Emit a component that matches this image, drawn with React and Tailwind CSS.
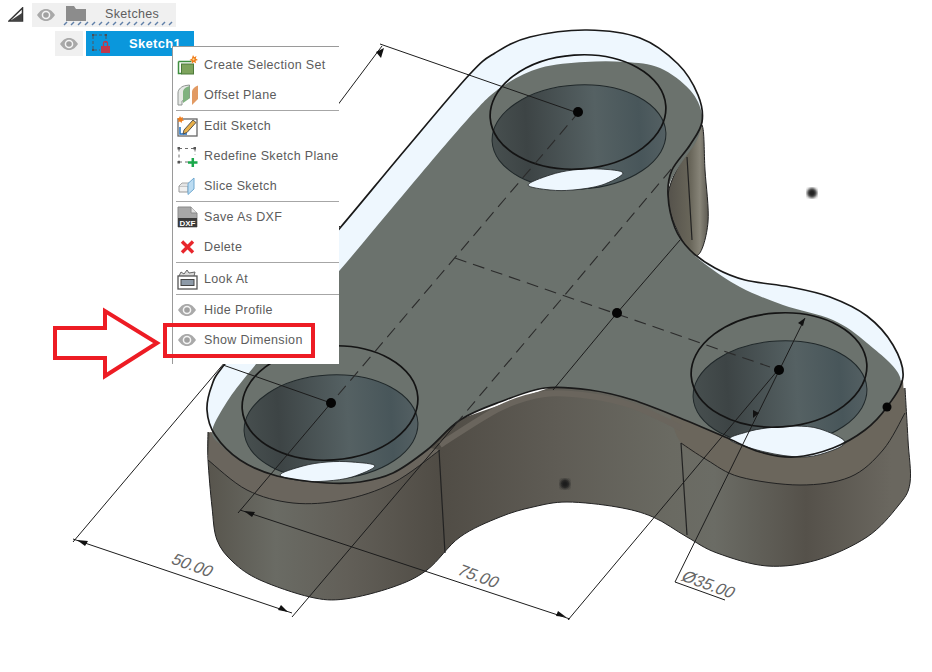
import React from "react";

// turn a list of points into a smooth svg path (catmull-rom)
function smooth(pts, closed = false) {
  const n = pts.length;
  const at = (i) => (closed ? pts[(i + n) % n] : pts[Math.max(0, Math.min(n - 1, i))]);
  let d = `M${pts[0][0]} ${pts[0][1]}`;
  const last = closed ? n : n - 1;
  for (let i = 0; i < last; i++) {
    const [p0, p1, p2, p3] = [at(i - 1), at(i), at(i + 1), at(i + 2)];
    const c1 = [p1[0] + (p2[0] - p0[0]) / 6, p1[1] + (p2[1] - p0[1]) / 6];
    const c2 = [p2[0] - (p3[0] - p1[0]) / 6, p2[1] - (p3[1] - p1[1]) / 6];
    d += `C${c1[0].toFixed(1)} ${c1[1].toFixed(1)} ${c2[0].toFixed(1)} ${c2[1].toFixed(1)} ${p2[0]} ${p2[1]}`;
  }
  return closed ? d + "Z" : d;
}

const outline = [
  [340, 228], [405, 150], [469, 75], [495, 53], [530, 37], [587, 30], [640, 38], [678, 64], [698, 95], [702, 122],
  [690, 145], [672, 170], [668, 195], [675, 228], [690, 250], [715, 268], [745, 280], [790, 287], [830, 297],
  [867, 316], [893, 345], [903, 377], [887, 407], [865, 430], [833, 448], [795, 457], [760, 452], [725, 437],
  [680, 418], [633, 400], [590, 390], [545, 388], [500, 402], [460, 420], [427, 450], [393, 473], [360, 482],
  [327, 483], [277, 476], [240, 460], [215, 435], [207, 410], [212, 385], [224, 365], [280, 297],
];

const face = [
  [340, 270], [403, 195], [467, 120], [500, 88], [540, 68], [585, 62], [625, 62], [660, 68], [690, 90], [702, 115],
  [697, 140], [680, 165], [668, 190], [672, 220], [685, 245], [705, 264], [740, 287], [783, 305], [833, 320],
  [867, 343], [900, 377], [887, 407], [865, 430], [833, 448], [795, 457], [760, 452], [725, 437], [680, 418],
  [633, 400], [590, 390], [545, 388], [500, 402], [460, 420], [427, 450], [393, 473], [360, 482], [327, 483],
  [277, 476], [240, 460], [222, 446], [212, 432], [225, 405], [247, 375], [290, 325],
];

const bodyEdge = [
  [208, 432], [208, 460], [212, 507], [217, 540], [233, 562], [260, 580], [310, 597], [345, 599], [393, 587], [427, 570],
  [460, 537], [500, 517], [533, 507], [567, 502], [617, 507], [653, 517], [687, 537], [717, 553], [767, 566],
  [817, 560], [867, 537], [898, 506], [910, 483], [908, 440], [905, 388],
];

const holes = [
  { cx: 578, cy: 112, wx: 579, wy: 137, id: "a", white: [[528, 185], [550, 175], [573, 170], [600, 169], [623, 173], [602, 185], [573, 190], [550, 190]] },
  { cx: 330, cy: 403, wx: 331, wy: 427, id: "b", white: [[280, 475], [303, 466], [327, 462], [352, 462], [375, 466], [352, 477], [327, 481], [303, 481]] },
  { cx: 779, cy: 370, wx: 780, wy: 393, id: "c", white: [[730, 440], [747, 432], [767, 428], [795, 426], [820, 429], [845, 442], [825, 453], [800, 457], [765, 452]] },
];

const leftBand = [[208, 460], [247, 490], [293, 503], [343, 500], [393, 483], [440, 450]];
const rightBand = [[681, 443], [707, 460], [740, 477], [800, 485], [850, 477], [883, 450], [905, 413]];

function Model() {
  return (
    <svg className="absolute inset-0" width="932" height="672" viewBox="0 0 932 672" fill="none">
      <defs>
        <linearGradient id="side" gradientUnits="userSpaceOnUse" x1="205" y1="0" x2="912" y2="0">
          <stop offset="0" stopColor="#57544c" />
          <stop offset="0.1" stopColor="#6a6b64" />
          <stop offset="0.2" stopColor="#625f58" />
          <stop offset="0.33" stopColor="#504c45" />
          <stop offset="0.5" stopColor="#5f5c55" />
          <stop offset="0.66" stopColor="#6a6a62" />
          <stop offset="0.72" stopColor="#6b6c65" />
          <stop offset="0.85" stopColor="#55514a" />
          <stop offset="0.97" stopColor="#6a675f" />
        </linearGradient>
        <linearGradient id="neck" gradientUnits="userSpaceOnUse" x1="668" y1="0" x2="708" y2="0">
          <stop offset="0" stopColor="#55524b" />
          <stop offset="0.55" stopColor="#686559" />
          <stop offset="0.8" stopColor="#878478" />
          <stop offset="1" stopColor="#5e5b53" />
        </linearGradient>
        {holes.map((h) => (
          <linearGradient key={h.id} id={`wall-${h.id}`} x1="0" y1="0" x2="1" y2="0">
            <stop offset="0" stopColor="#474f4f" />
            <stop offset="0.2" stopColor="#3d4445" />
            <stop offset="0.6" stopColor="#556163" />
            <stop offset="0.85" stopColor="#48565a" />
            <stop offset="1" stopColor="#546063" />
          </linearGradient>
        ))}
        <filter id="soft"><feGaussianBlur stdDeviation="1.6" /></filter>
      </defs>

      <path d={smooth(outline, true)} fill="#eef7fe" />
      <path d={smooth([[702, 125], [705, 170], [708, 222], [698, 255], [682, 240], [668, 195], [690, 145]], true)} fill="url(#neck)" stroke="#222" strokeWidth="1" />
      <path d={smooth(bodyEdge) + "L800 400L600 370L400 440L250 440Z"} fill="url(#side)" />
      <path d={smooth(bodyEdge)} stroke="#222" strokeWidth="1" />
      <path d={smooth(leftBand) + "L393 440L250 440L210 432Z"} fill="#6a655d" />
      <path d={smooth([[670, 415], ...rightBand]) + "L903 380L800 400Z"} fill="#6b665c" />
      <path d={smooth([[440, 445], [500, 408], [545, 394], [590, 396], [633, 406], [681, 428]])} stroke="#6a655d" strokeWidth="6" />
      <path d={smooth(face, true)} fill="#6b726d" />

      {holes.map((h) => (
        <g key={h.id}>
          <ellipse cx={h.wx} cy={h.wy} rx="87" ry="52" transform={`rotate(-3 ${h.wx} ${h.wy})`} fill={`url(#wall-${h.id})`} stroke="#20282a" strokeWidth="1" />
          <path d={smooth(h.white, true)} fill="#eef7fe" stroke="#1f2324" strokeWidth="0.8" />
          <ellipse cx={h.cx} cy={h.cy} rx="88" ry="57" transform={`rotate(-4 ${h.cx} ${h.cy})`} stroke="#141414" strokeWidth="1.7" />
        </g>
      ))}

      <path d={smooth(outline, true)} stroke="#1a1a1a" strokeWidth="1.7" />
      <path d={smooth(leftBand)} stroke="#222" strokeWidth="1" />
      <path d={smooth(rightBand)} stroke="#222" strokeWidth="1" />
      <path d="M439 450L445 553M681 443L687 535M687 157L692 240" stroke="#222" strokeWidth="1.2" />

      {/* dashed construction lines */}
      <g stroke="#2b2b2b" strokeWidth="1.1" strokeDasharray="12 7">
        <path d="M338 395L578 113" />
        <path d="M455 425L673 167" />
        <path d="M455 258L770 367" />
      </g>

      {/* dimensions */}
      <g stroke="#1c1c1c" strokeWidth="1">
        <path d="M380 44L578 113" />
        <path d="M382 46L250 222" />
        <path d="M73 542L340 226" />
        <path d="M331 403L223 365" />
        <path d="M331 403L238 513" />
        <path d="M73 539L292 613" />
        <path d="M292 617L455 425" />
        <path d="M553 390L617 313L680 240" />
        <path d="M240 510L570 619" />
        <path d="M568 620L778 370" />
        <path d="M805 318L675 582L725 600" />
      </g>
      <g fill="#111">
        <path d="M384 48L376 52L381 58Z" />
        <path d="M77 540L88 541L85 546Z" />
        <path d="M288 612L278 610L281 605Z" />
        <path d="M244 511L255 512L252 517Z" />
        <path d="M566 617L556 616L558 611Z" />
        <path d="M805 318L798 323L803 326Z" />
        <path d="M753 418L753 410L759 413Z" />
      </g>

      {[[578, 112, 5], [331, 403, 5], [779, 370, 5], [617, 313, 5], [887, 407, 4.5]].map(([x, y, r]) => (
        <circle key={x} cx={x} cy={y} r={r} fill="#050505" />
      ))}
      <circle cx="812" cy="193" r="5" fill="#222" filter="url(#soft)" />
      <circle cx="565" cy="484" r="5" fill="#1c1c1c" filter="url(#soft)" />

      <g fill="#666" fontFamily="Liberation Sans, sans-serif" fontSize="16.500">
        <text transform="translate(170 563) rotate(20) skewX(-14)">50.00</text>
        <text transform="translate(456 574) rotate(20) skewX(-14)">75.00</text>
        <text transform="translate(680 580) rotate(20) skewX(-14)">Ø35.00</text>
      </g>
    </svg>
  );
}

function Eye() {
  return (
    <svg width="20" height="14" viewBox="0 0 20 14" className="shrink-0">
      <path d="M1 7C4 2.500 7 1 10 1s6 1.500 9 6c-3 4.500-6 6-9 6s-6-1.500-9-6Z" fill="#a9a9a9" />
      <circle cx="10" cy="7" r="4.300" fill="#f4f4f4" />
      <circle cx="10" cy="7" r="2.800" fill="#a0a0a0" />
    </svg>
  );
}

const icons = {
  selection: (
    <svg width="21" height="21" viewBox="0 0 21 21">
      <path d="M1.500 6.500h13M1.500 6.500v12h3" stroke="#3f8f3f" strokeWidth="1.500" fill="none" />
      <rect x="4.500" y="9" width="12" height="10" fill="#7da35c" stroke="#4d7a3a" />
      <path d="M16 0l1.200 2.300L19.500 1l-.8 2.600L21 5l-2.500.7.600 2.500-2.300-1.300-1.900 1.500-.2-2.600L12.500 5l2.300-1.200Z" fill="#ef7c1a" />
      <circle cx="16.500" cy="4.300" r="1.100" fill="#ffd98a" />
    </svg>
  ),
  offset: (
    <svg width="21" height="22" viewBox="0 0 21 22">
      <path d="M1 21V9C1 5 5 2 9 1.500L12.500 1V14L5 17V21Z" fill="#e6e9e6" stroke="#8f9591" />
      <path d="M6 19V8C6 5 9 3 12.500 2V14.500Z" fill="#7fb27f" />
      <path d="M15 21V8C15 5 18 2.500 21 1.500V15Z" fill="#e29a63" />
    </svg>
  ),
  edit: (
    <svg width="21" height="21" viewBox="0 0 21 21">
      <rect x="1" y="3" width="19" height="17" fill="#fff" stroke="#666" strokeWidth="1.300" />
      <path d="M3 11v7h7" stroke="#1f6fc0" strokeWidth="1.500" fill="none" />
      <path d="M7 14l9-10 3 2.500-9 10-4 1.500Z" fill="#e8b04a" stroke="#444" strokeWidth=".9" />
      <path d="M3 0l1 1.800L6 1l-.6 2L7 4.500l-2 .4-.5 2-1.400-1.500L1 6l.7-2L0 2.500l2 -.4Z" fill="#ef7c1a" />
    </svg>
  ),
  redefine: (
    <svg width="21" height="21" viewBox="0 0 21 21">
      <path d="M2 2.500V16M2 2.500h16M18 2.500V9M2 16h9" stroke="#6d6d6d" strokeWidth="1" strokeDasharray="3 3" fill="none" />
      <g fill="#555"><rect x="0.500" y="1" width="2.500" height="2.500" /><rect x="16.500" y="1" width="2.500" height="2.500" /><rect x="0.500" y="15" width="2.500" height="2.500" /></g>
      <path d="M11 16.500h9.500M15.800 12v9" stroke="#19a84a" strokeWidth="2.500" />
    </svg>
  ),
  slice: (
    <svg width="20" height="18" viewBox="0 0 20 18">
      <path d="M2 9h9v6H2Z" fill="#f0f0f0" stroke="#9a9a9a" />
      <path d="M2 9l3-3h8v3" fill="#e4e4e4" stroke="#a8a8a8" />
      <path d="M11 6.500L17 1v11l-6 5.500Z" fill="#bcdcf2" stroke="#6fa8d0" />
    </svg>
  ),
  dxf: (
    <svg width="21" height="22" viewBox="0 0 21 22">
      <path d="M1 1h13l6 6v14H1Z" fill="#a8a8a8" stroke="#8a8a8a" />
      <path d="M14 1v6h6" fill="#e2e2e2" stroke="#8a8a8a" />
      <rect x="1" y="12" width="19" height="9" fill="#3a3a3a" />
      <text x="10.500" y="20" textAnchor="middle" fontSize="8" fontWeight="700" fill="#fff" fontFamily="Liberation Sans, sans-serif">DXF</text>
    </svg>
  ),
  x: (
    <svg width="21" height="16" viewBox="0 0 21 16">
      <path d="M5 2.500l11 11M16 2.500L5 13.500" stroke="#e8262c" strokeWidth="3.400" />
    </svg>
  ),
  look: (
    <svg width="21" height="22" viewBox="0 0 21 22">
      <path d="M2 8l2-4 3 2 3-4 2 3 6-1-1 4" fill="#d9d9d9" stroke="#666" />
      <rect x="1" y="8" width="19" height="13" fill="#fff" stroke="#555" strokeWidth="1.300" />
      <rect x="4" y="11.500" width="13" height="6" fill="#8d9aa8" stroke="#444" />
    </svg>
  ),
  eye: <Eye />,
};

const menu = [
  [
    { label: "Create Selection Set", icon: "selection" },
    { label: "Offset Plane", icon: "offset" },
  ],
  [
    { label: "Edit Sketch", icon: "edit" },
    { label: "Redefine Sketch Plane", icon: "redefine" },
    { label: "Slice Sketch", icon: "slice" },
  ],
  [
    { label: "Save As DXF", icon: "dxf" },
    { label: "Delete", icon: "x" },
  ],
  [{ label: "Look At", icon: "look" }],
  [
    { label: "Hide Profile", icon: "eye" },
    { label: "Show Dimension", icon: "eye" },
  ],
];

function ContextMenu() {
  return (
    <div className="absolute left-[172px] top-[46px] z-20 w-[167px] h-[318px] bg-white border-l border-t border-[#9a9a9a] pt-[3px] pl-[3px] font-['Liberation_Sans',sans-serif]">
      {menu.map((group, i) => (
        <div key={i} className={i === 0 ? "" : i === 3 ? "border-t border-[#a6a6a6] pt-[1px]" : "border-t border-[#a6a6a6]"}>
          {group.map((item) => (
            <div key={item.label} className="h-[30px] flex items-center">
              <span className="w-[28px] flex justify-center shrink-0 pr-[6px]">{icons[item.icon]}</span>
              <span className="text-[12.5px] tracking-[0.35px] text-[#5c5c5c] whitespace-nowrap">{item.label}</span>
            </div>
          ))}
        </div>
      ))}
    </div>
  );
}

function Tree() {
  return (
    <div className="relative z-10 w-fit pt-[2px] font-['Liberation_Sans',sans-serif]">
      <div className="flex items-center h-[25px]">
        <svg width="16" height="15" viewBox="0 0 16 15" className="ml-[8px]">
          <path d="M1 14L14.500 1V14Z" fill="#fff" stroke="#333" strokeWidth="1.500" />
          <path d="M2 14L14 6V14Z" fill="#444" />
        </svg>
        <div className="ml-[8px] w-[144px] h-[24px] bg-[#f0f0f0] flex items-center relative">
          <span className="ml-[4px]"><Eye /></span>
          <svg width="22" height="16" viewBox="0 0 22 16" className="ml-[9px] mb-[3px]">
            <path d="M1 16V1h8l2 3h10v12Z" fill="#8c8c8c" />
          </svg>
          <span className="ml-[18px] text-[12.5px] tracking-[0.35px] text-[#5e5e5e]">Sketches</span>
          <svg width="112" height="5" viewBox="0 0 112 5" className="absolute left-[31px] bottom-[1px]">
            {Array.from({ length: 16 }, (_, i) => (
              <path key={i} d={`M${i * 7 + 1} 4L${i * 7 + 4} 1`} stroke="#5f7fa8" strokeWidth="1.500" />
            ))}
          </svg>
        </div>
      </div>
      <div className="flex items-center h-[25px] mt-[4px] ml-[55px] gap-[3px]">
        <div className="w-[28px] h-[25px] bg-[#f0f0f0] flex items-center justify-center"><Eye /></div>
        <div className="w-[108px] h-[25px] bg-[#0a97dc] flex items-center">
          <svg width="20" height="21" viewBox="0 0 20 21" className="ml-[5px]">
            <path d="M2 3v14M3 2h12M15 3v7M3 17h6" stroke="#4f5660" strokeDasharray="3 2" fill="none" />
            <g fill="#4b4e55"><rect x="1" y="1" width="2" height="2" /><rect x="14" y="1" width="2" height="2" /><rect x="1" y="16" width="2" height="2" /></g>
            <rect x="10" y="13" width="9" height="7" fill="#c0394c" />
            <path d="M12.500 13v-2.500a2 2 0 0 1 4 0V13" stroke="#c0394c" strokeWidth="1.300" fill="none" />
          </svg>
          <span className="ml-[18px] text-[13px] font-bold tracking-[0.3px] text-white">Sketch1</span>
        </div>
      </div>
    </div>
  );
}

function Callout() {
  return (
    <>
      <svg width="112" height="76" viewBox="0 0 112 76" className="absolute left-[52px] top-[306px] z-30">
        <path d="M3 22H53V5L105 37L53 70V52H3Z" fill="none" stroke="#ed1c24" strokeWidth="4" />
      </svg>
      <div className="absolute left-[163px] top-[323px] z-30 w-[152px] h-[35px] border-[4px] border-[#ed1c24]" />
    </>
  );
}

export default function App() {
  return (
    <div className="relative w-[932px] h-[672px] bg-white overflow-hidden">
      <Model />
      <Tree />
      <ContextMenu />
      <Callout />
    </div>
  );
}
